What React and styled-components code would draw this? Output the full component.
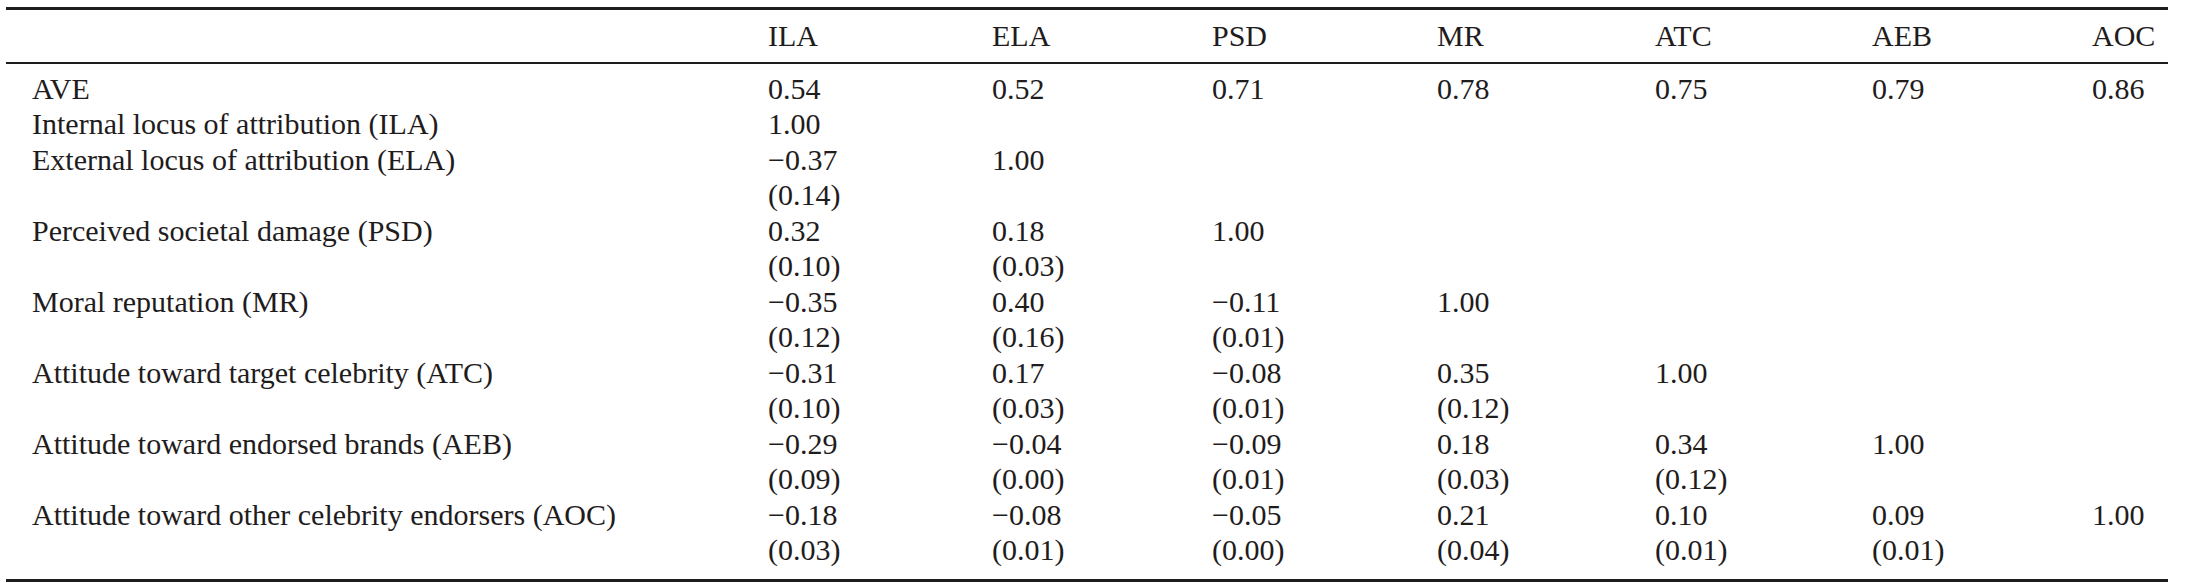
import React from "react";
import styled, { createGlobalStyle } from "styled-components";

const Global = createGlobalStyle`
  html, body { margin: 0; padding: 0; background: #ffffff; }
  body { font-family: "Liberation Serif", "Times New Roman", serif; }
`;

const Page = styled.div`
  padding: 7px 0 0 6px;
`;

const Table = styled.div`
  width: 2162px;
  border-top: 3px solid #1d1d1b;
  border-bottom: 3px solid #1d1d1b;
  font-family: "Liberation Serif", "Times New Roman", serif;
  font-size: 30px;
  line-height: 35.5px;
  color: #1f1c1d;
`;

const Row = styled.div`
  display: grid;
  grid-template-columns: 762px 224px 220px 225px 218px 217px 220px 76px;
  align-items: start;
`;

const HeadRow = styled(Row)`
  padding: 7.5px 0 9px;
  border-bottom: 2px solid #1d1d1b;
`;

const Body = styled.div`
  padding: 6.5px 0 11.5px;
`;

const Label = styled.div`
  padding-left: 26px;
  white-space: nowrap;
`;

const Cell = styled.div`
  display: flex;
  flex-direction: column;
  white-space: nowrap;
`;

const Line = styled.span`
  display: block;
`;

const cols = ["ILA", "ELA", "PSD", "MR", "ATC", "AEB", "AOC"];

const rows = [
  { label: "AVE", cells: [["0.54"], ["0.52"], ["0.71"], ["0.78"], ["0.75"], ["0.79"], ["0.86"]] },
  { label: "Internal locus of attribution (ILA)", cells: [["1.00"]] },
  { label: "External locus of attribution (ELA)", cells: [["\u22120.37", "(0.14)"], ["1.00"]] },
  { label: "Perceived societal damage (PSD)", cells: [["0.32", "(0.10)"], ["0.18", "(0.03)"], ["1.00"]] },
  {
    label: "Moral reputation (MR)",
    cells: [["\u22120.35", "(0.12)"], ["0.40", "(0.16)"], ["\u22120.11", "(0.01)"], ["1.00"]],
  },
  {
    label: "Attitude toward target celebrity (ATC)",
    cells: [["\u22120.31", "(0.10)"], ["0.17", "(0.03)"], ["\u22120.08", "(0.01)"], ["0.35", "(0.12)"], ["1.00"]],
  },
  {
    label: "Attitude toward endorsed brands (AEB)",
    cells: [
      ["\u22120.29", "(0.09)"],
      ["\u22120.04", "(0.00)"],
      ["\u22120.09", "(0.01)"],
      ["0.18", "(0.03)"],
      ["0.34", "(0.12)"],
      ["1.00"],
    ],
  },
  {
    label: "Attitude toward other celebrity endorsers (AOC)",
    cells: [
      ["\u22120.18", "(0.03)"],
      ["\u22120.08", "(0.01)"],
      ["\u22120.05", "(0.00)"],
      ["0.21", "(0.04)"],
      ["0.10", "(0.01)"],
      ["0.09", "(0.01)"],
      ["1.00"],
    ],
  },
];

export default function App() {
  return (
    <>
      <Global />
      <Page>
        <Table>
          <HeadRow>
            <Label />
            {cols.map((c) => (
              <Cell key={c}>{c}</Cell>
            ))}
          </HeadRow>
          <Body>
            {rows.map((r) => (
              <Row key={r.label}>
                <Label>{r.label}</Label>
                {cols.map((c, i) => (
                  <Cell key={c}>
                    {(r.cells[i] || []).map((v, j) => (
                      <Line key={j}>{v}</Line>
                    ))}
                  </Cell>
                ))}
              </Row>
            ))}
          </Body>
        </Table>
      </Page>
    </>
  );
}
